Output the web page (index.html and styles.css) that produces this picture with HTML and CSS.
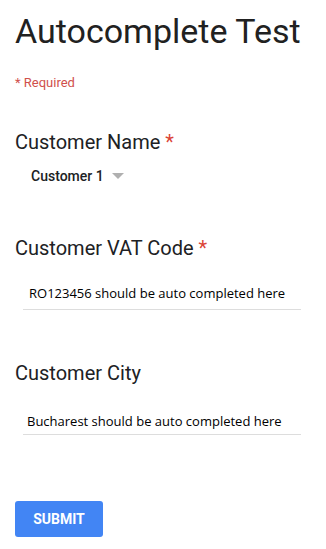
FILE: index.html
```html
<!DOCTYPE html>
<html>
<head>
<meta charset="utf-8">
<link rel="stylesheet" href="styles.css">
</head>
<body>
<form class="form">
  <h1 class="title">Autocomplete Test</h1>
  <div class="required">* Required</div>

  <div class="label label-name">Customer Name <span class="star">*</span></div>
  <div class="select">
    <span class="select-value">Customer 1</span>
    <span class="arrow"></span>
  </div>

  <div class="label label-vat">Customer VAT Code <span class="star">*</span></div>
  <input class="field field-vat" type="text" value="RO123456 should be auto completed here">

  <div class="label label-city">Customer City</div>
  <input class="field field-city" type="text" value="Bucharest should be auto completed here">

  <button class="submit" type="button">SUBMIT</button>
</form>
</body>
</html>
```
FILE: styles.css
```css
html, body {
  margin: 0;
  padding: 0;
  background: #ffffff;
}

.form {
  display: flex;
  flex-direction: column;
  align-items: flex-start;
  padding: 0 0 0 15px;
  font-family: Roboto, "Liberation Sans", sans-serif;
}

.title {
  margin: 9px 0 0;
  font-size: 34px;
  line-height: 44px;
  font-weight: 400;
  color: #212121;
}

.required {
  margin-top: 22px;
  font-size: 13px;
  line-height: 16px;
  color: #d0504c;
}

.label {
  font-size: 20px;
  line-height: 24px;
  color: #202124;
}

.label-name { margin-top: 39px; }
.label-vat { margin-top: 50px; }
.label-city { margin-top: 51px; }

.star {
  color: #db4437;
}

.select {
  margin-top: 12px;
  padding-left: 16px;
  display: flex;
  align-items: center;
  gap: 8px;
  height: 20px;
}

.select-value {
  font-size: 14px;
  line-height: 20px;
  font-weight: 500;
  color: #202124;
}

.arrow {
  width: 0;
  height: 0;
  border-left: 6px solid transparent;
  border-right: 6px solid transparent;
  border-top: 6px solid #b0b0b0;
}

.field {
  display: block;
  box-sizing: border-box;
  width: 278px;
  margin-left: 8px;
  border: 0;
  border-bottom: 1px solid #dddddd;
  outline: none;
  background: transparent;
  font-family: "Open Sans", "Noto Sans", sans-serif;
  font-size: 13px;
  line-height: 20px;
  color: #000000;
}

.field-vat {
  margin-top: 23px;
  height: 27px;
  padding: 0 0 6px 6px;
}

.field-city {
  margin-top: 26px;
  height: 24px;
  padding: 0 0 3px 4px;
}

.submit {
  margin-top: 66px;
  width: 88px;
  height: 36px;
  border: 0;
  border-radius: 3px;
  background: #4285f4;
  color: #ffffff;
  font-family: Roboto, "Liberation Sans", sans-serif;
  font-size: 14px;
  font-weight: 700;
  letter-spacing: 0;
  padding: 0;
}
```
